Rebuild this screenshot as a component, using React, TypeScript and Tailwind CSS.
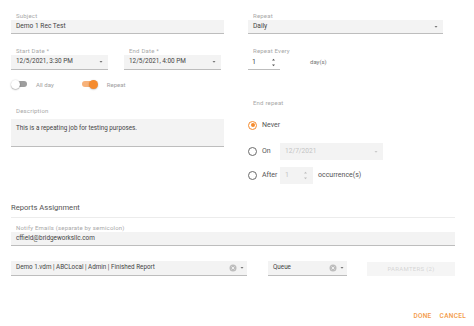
import React from "react";

const Label = ({ children, className = "" }: { children: React.ReactNode; className?: string }) => (
  <div className={`h-[8px] text-[6px] tracking-[0.2px] leading-[8px] text-[#a8a8a8] pl-[5px] ${className}`}>{children}</div>
);

const Caret = () => (
  <svg width="6" height="4" viewBox="0 0 6 4" className="shrink-0">
    <path d="M1.5 1 L3 2.8 L4.5 1 Z" fill="#757575" />
  </svg>
);

const ClearIcon = () => (
  <svg width="8" height="8" viewBox="0 0 8 8" className="shrink-0">
    <circle cx="4" cy="4" r="3.5" fill="#bdbdbd" />
    <path d="M2.6 2.6 L5.4 5.4 M5.4 2.6 L2.6 5.4" stroke="#f5f5f5" strokeWidth="0.9" />
  </svg>
);

const Spin = ({ disabled = false }: { disabled?: boolean }) => (
  <div className="flex flex-col items-center justify-center gap-[3px] text-[5px] leading-[4px]" style={{ color: disabled ? "#bdbdbd" : "#555" }}>
    <svg width="5" height="3" viewBox="0 0 5 3"><path d="M1 2.5 L2.5 0.8 L4 2.5 Z" fill="currentColor" /></svg>
    <svg width="5" height="3" viewBox="0 0 5 3"><path d="M1 0.5 L2.5 2.2 L4 0.5 Z" fill="currentColor" /></svg>
  </div>
);

const Radio = ({ checked }: { checked?: boolean }) => (
  <div
    className={`w-[9px] h-[9px] rounded-full border flex items-center justify-center shrink-0 ${checked ? "border-[#f58b2e]" : "border-[#6b6b6b]"}`}
  >
    {checked && <div className="w-[4px] h-[4px] rounded-full bg-[#f58b2e]" />}
  </div>
);

export default function App() {
  return (
    <div
      className="w-[474px] h-[326px] bg-white text-[#444] relative overflow-hidden"
      style={{ fontFamily: "Roboto, 'Liberation Sans', sans-serif" }}
    >
      <div className="flex pl-[11px] pt-[12px] gap-[24px]">
        {/* Left column */}
        <div className="w-[213px] flex flex-col">
          <Label>Subject</Label>
          <div className="h-[14px] bg-[#f3f3f3] border-b border-[#bdbdbd] flex items-center pl-[5px] text-[6.6px]">
            Demo 1 Rec Test
          </div>
          <div className="flex gap-[16px] mt-[13px]">
            <div className="w-[97px] flex flex-col">
              <Label>Start Date *</Label>
              <div className="h-[15px] bg-[#f3f3f3] border-b border-[#bdbdbd] flex items-center justify-between pl-[5px] pr-[4px] text-[6.4px]">
                <span>12/5/2021, 3:30 PM</span>
                <Caret />
              </div>
            </div>
            <div className="w-[97px] flex flex-col">
              <Label>End Date *</Label>
              <div className="h-[15px] bg-[#f3f3f3] border-b border-[#bdbdbd] flex items-center justify-between pl-[5px] pr-[4px] text-[6.4px]">
                <span>12/5/2021, 4:00 PM</span>
                <Caret />
              </div>
            </div>
          </div>
          <div className="flex items-center h-[10px] mt-[9px]">
            <div className="relative w-[16px] h-[10px] flex items-center">
              <div className="absolute left-[2px] w-[14px] h-[6px] rounded-full bg-[#9e9e9e]" />
              <div className="absolute left-0 w-[9px] h-[9px] rounded-full bg-white shadow-[0_0.5px_1.5px_rgba(0,0,0,0.45)]" />
            </div>
            <span className="ml-[9px] text-[6px] text-[#9e9e9e]">All day</span>
            <div className="relative w-[17px] h-[10px] flex items-center ml-[28px]">
              <div className="absolute left-0 w-[14px] h-[6px] rounded-full bg-[#f7b27a]" />
              <div className="absolute left-[7px] w-[9px] h-[9px] rounded-full bg-[#f58b2e] shadow-[0_0.5px_1.5px_rgba(0,0,0,0.3)]" />
            </div>
            <span className="ml-[8px] text-[6px] text-[#9e9e9e]">Repeat</span>
          </div>
          <Label className="mt-[18px]">Description</Label>
          <div className="h-[28px] mt-[4px] bg-[#f3f3f3] border-b border-[#bdbdbd] pl-[5px] pt-[5px] text-[6.3px] leading-[9px]">
            This is a repeating job for testing purposes.
          </div>
        </div>

        {/* Right column */}
        <div className="w-[195px] flex flex-col">
          <Label>Repeat</Label>
          <div className="h-[14px] bg-[#f3f3f3] border-b border-[#bdbdbd] flex items-center justify-between pl-[5px] pr-[4px] text-[6.6px]">
            <span>Daily</span>
            <Caret />
          </div>
          <div className="flex mt-[13px] items-start">
            <div className="w-[32px] flex flex-col">
              <Label className="w-[60px]">Repeat Every</Label>
              <div className="h-[15px] border-b border-[#bdbdbd] flex items-center justify-between pl-[4px] pr-[4px] text-[7px]">
                <span>1</span>
                <Spin />
              </div>
            </div>
            <span className="ml-[30px] mt-[10px] text-[6px] text-[#757575]">day(s)</span>
          </div>
          <Label className="mt-[29px]">End repeat</Label>
          <div className="flex items-center h-[12px] mt-[12px] gap-[4px]">
            <Radio checked />
            <span className="text-[7px] text-[#555] ml-[1px]">Never</span>
          </div>
          <div className="flex items-center h-[17px] mt-[12px]">
            <Radio />
            <span className="text-[7px] text-[#555] ml-[5px] w-[18px]">On</span>
            <div className="w-[103px] h-[17px] bg-[#f3f3f3] flex items-center justify-between pl-[5px] pr-[4px] text-[6.6px] text-[#c4c4c4]">
              <span>12/7/2021</span>
              <svg width="6" height="4" viewBox="0 0 6 4"><path d="M1.5 1 L3 2.8 L4.5 1 Z" fill="#c8c8c8" /></svg>
            </div>
          </div>
          <div className="flex items-center h-[17px] mt-[7px]">
            <Radio />
            <span className="text-[7px] text-[#555] ml-[5px] w-[18px]">After</span>
            <div className="w-[33px] h-[17px] bg-[#f3f3f3] flex items-center justify-between pl-[5px] pr-[5px] text-[7px] text-[#c4c4c4]">
              <span>1</span>
              <Spin disabled />
            </div>
            <span className="ml-[5px] text-[7px] text-[#555]">occurrence(s)</span>
          </div>
        </div>
      </div>

      {/* Reports Assignment */}
      <div className="mx-[11px] mt-[19px] w-[444px]">
        <div className="text-[7.6px] leading-[10px] text-[#555] pb-[4px] border-b border-[#ececec]">Reports Assignment</div>
        <Label className="mt-[6px]">Notify Emails (separate by semicolon)</Label>
        <div className="h-[14px] bg-[#f3f3f3] border-b border-[#bdbdbd] flex items-center pl-[5px] text-[6.4px]">
          cffield@bridgeworksllc.com
        </div>
        <div className="flex items-center mt-[15px] h-[15px]">
          <div className="w-[236px] h-[15px] bg-[#f3f3f3] border-b border-[#bdbdbd] flex items-center pl-[5px] pr-[2px] text-[6.3px]">
            <span className="flex-1">Demo 1.vdm | ABCLocal | Admin | Finished Report</span>
            <ClearIcon />
            <span className="ml-[2px]"><Caret /></span>
          </div>
          <div className="w-[79px] ml-[21px] h-[15px] bg-[#f3f3f3] border-b border-[#bdbdbd] flex items-center pl-[5px] pr-[2px] text-[6.3px]">
            <span className="flex-1">Queue</span>
            <ClearIcon />
            <span className="ml-[2px]"><Caret /></span>
          </div>
          <div className="w-[88px] ml-[20px] h-[14px] bg-[#f5f5f5] flex items-center justify-center text-[6px] tracking-[0.3px] text-[#d6d6d6]">
            PARAMTERS (2)
          </div>
        </div>
      </div>

      <div className="absolute right-[8px] bottom-[4px] flex gap-[8px] text-[6.5px] font-medium text-[#f39a46] tracking-[0.3px]">
        <span>DONE</span>
        <span>CANCEL</span>
      </div>
    </div>
  );
}
